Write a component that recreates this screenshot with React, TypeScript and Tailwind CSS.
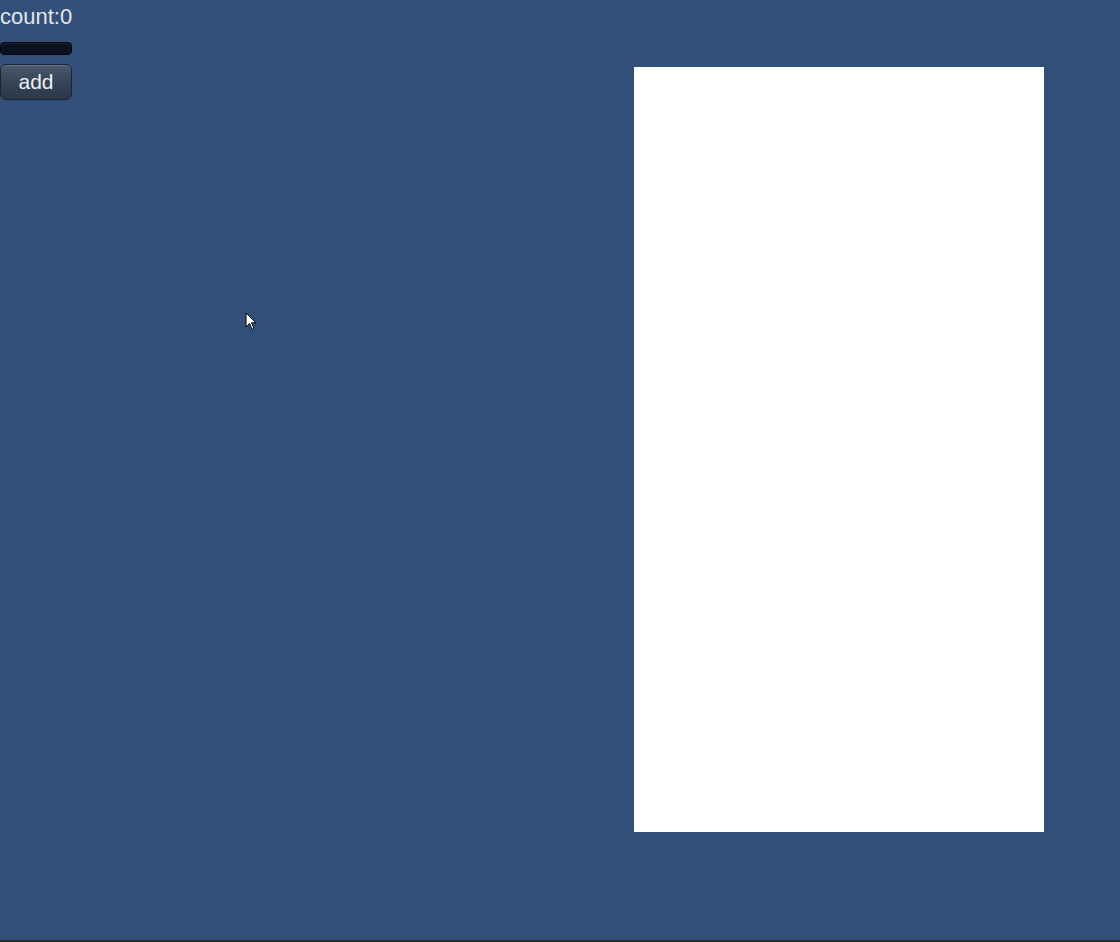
import React from "react";

export default function App() {
  return (
    <div className="relative flex h-[942px] w-[1120px] flex-col overflow-hidden bg-[#314f78] font-['Liberation_Sans',Arial,sans-serif]">
      <div className="flex flex-1">
        <div className="flex w-[634px] flex-col">
          <div className="h-[33px] pt-[5px] text-[22px] leading-[24px] text-[#e6e6e6]">count:0</div>
          <div className="mt-[9px] h-[13px] w-[72px] rounded-[4px] border border-[#05080d] bg-[#0b1320] shadow-[inset_0_1px_0_rgba(255,255,255,0.08)]" />
          <button className="mt-[9px] flex h-[36px] w-[72px] items-center justify-center rounded-[6px] border border-[#1a2330] bg-gradient-to-b from-[#4a5a6e] via-[#354456] to-[#2b3848] pb-[2px] text-[21px] leading-none text-[#f0f0f0] shadow-[inset_0_1px_0_rgba(255,255,255,0.15)]">
            add
          </button>
        </div>
        <div className="mt-[67px] h-[765px] w-[410px] bg-white" />
      </div>
      <div className="h-[2px] bg-[#2a2a2a]" />
      <svg className="absolute left-[245px] top-[312px]" width="13" height="20" viewBox="0 0 13 20">
        <path d="M1 1 L1 15 L4.5 11.5 L7 17.5 L9 16.5 L6.5 10.8 L11 10.8 Z" fill="white" stroke="black" strokeWidth="1" strokeLinejoin="miter" />
      </svg>
    </div>
  );
}
